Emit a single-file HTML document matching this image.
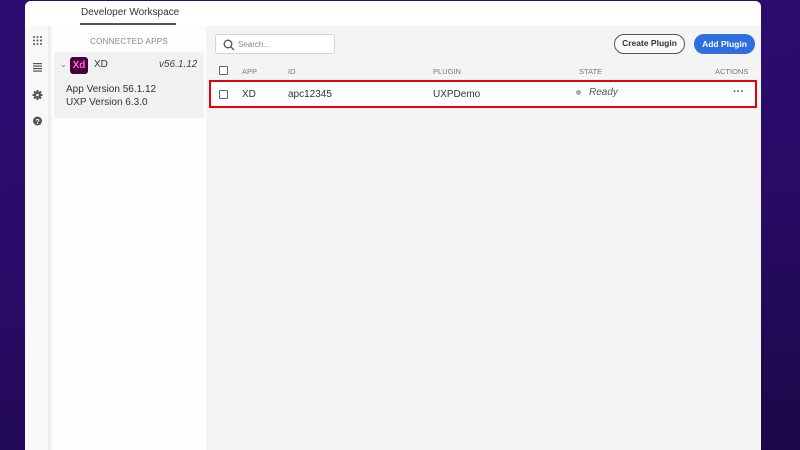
<!DOCTYPE html>
<html><head><style>
*{margin:0;padding:0;box-sizing:border-box}
html,body{width:800px;height:450px;overflow:hidden}
body{font-family:"Liberation Sans",sans-serif;background:linear-gradient(170deg,#2e0d72 0%,#2a0b68 50%,#1c0848 100%);position:relative}
.win{position:absolute;left:25px;top:1px;width:736px;height:449px;background:#f4f4f4;border-radius:6px 6px 0 0;overflow:hidden}
.title{position:absolute;left:0;top:0;width:736px;height:25px;background:#fff}
.title span{position:absolute;left:56px;top:6px;font-size:10px;color:#333}
.title i{position:absolute;left:55px;top:22px;width:96px;height:2px;background:#555}
.icons{position:absolute;left:0;top:25px;width:25px;height:440px;background:#f8f8f8;border-right:2px solid #eee}
.panel{position:absolute;left:27px;top:25px;width:154px;height:440px;background:#fdfdfd}
.ph{position:absolute;left:0;width:154px;top:11px;text-align:center;font-size:8px;color:#888;letter-spacing:.3px}
.card{position:absolute;left:2px;top:26px;width:150px;height:66px;background:#f1f1f1;border-radius:2px}
.t{position:absolute;white-space:nowrap}
.hdr{font-size:7.5px;color:#777;top:66px}
.cb{position:absolute;width:9px;height:9px;border:1px solid #666;border-radius:1px;background:#fff}
</style></head><body>
<div class="win">
<div class="title"><span>Developer Workspace</span><i></i></div>
<div class="icons">
<svg width="25" height="110" style="position:absolute;left:0;top:0">
<g fill="#555"><circle cx="9" cy="11" r="1"/><circle cx="12.5" cy="11" r="1"/><circle cx="16" cy="11" r="1"/><circle cx="9" cy="14.5" r="1"/><circle cx="12.5" cy="14.5" r="1"/><circle cx="16" cy="14.5" r="1"/><circle cx="9" cy="18" r="1"/><circle cx="12.5" cy="18" r="1"/><circle cx="16" cy="18" r="1"/>
<rect x="8" y="37" width="9" height="1.2"/><rect x="8" y="39.5" width="9" height="1.2"/><rect x="8" y="42" width="9" height="1.2"/><rect x="8" y="44.5" width="9" height="1.2"/>
<circle cx="12.5" cy="69" r="3.5"/><circle cx="12.5" cy="95" r="4.5"/></g>
<g stroke="#555" stroke-width="2"><line x1="12.5" y1="64" x2="12.5" y2="74"/><line x1="7.5" y1="69" x2="17.5" y2="69"/><line x1="9" y1="65.5" x2="16" y2="72.5"/><line x1="16" y1="65.5" x2="9" y2="72.5"/></g>
<circle cx="12.5" cy="69" r="1.3" fill="#f8f8f8"/>
<text x="12.5" y="98" font-size="7" font-weight="bold" fill="#fff" text-anchor="middle" font-family="Liberation Sans">?</text>
</svg></div>
<div class="panel">
<div class="ph">CONNECTED APPS</div>
<div class="card">
<div class="t" style="left:6px;top:8px;font-size:8px;color:#777">⌄</div>
<div class="t" style="left:16px;top:5px;width:18px;height:17px;background:#470137;border-radius:3px;color:#ff61f6;font-weight:bold;font-size:10px;text-align:center;line-height:17px">Xd</div>
<div class="t" style="left:40px;top:7px;font-size:10px;color:#333">XD</div>
<div class="t" style="left:105px;top:7px;font-size:10px;color:#444;font-style:italic">v56.1.12</div>
<div class="t" style="left:12px;top:31px;font-size:10px;color:#333;line-height:13px">App Version 56.1.12<br>UXP Version 6.3.0</div>
</div></div>
<div class="t" style="left:190px;top:33px;width:120px;height:20px;background:#fff;border:1px solid #d4d4d4;border-radius:3px">
<svg width="14" height="14" style="position:absolute;left:6px;top:3px"><circle cx="6" cy="6" r="3.8" fill="none" stroke="#555" stroke-width="1.3"/><line x1="8.8" y1="8.8" x2="12" y2="12" stroke="#555" stroke-width="1.3"/></svg>
<span style="position:absolute;left:22px;top:5px;font-size:8px;color:#888">Search...</span></div>
<div class="t" style="left:589px;top:33px;width:71px;height:20px;border:1.5px solid #555;border-radius:10px;font-size:8.5px;font-weight:bold;color:#333;text-align:center;line-height:17px;background:#fafafa">Create Plugin</div>
<div class="t" style="left:669px;top:33px;width:61px;height:20px;background:#2d6fdf;border-radius:10px;font-size:8.5px;font-weight:bold;color:#fff;text-align:center;line-height:20px">Add Plugin</div>
<div class="cb" style="left:194px;top:65px"></div>
<div class="t hdr" style="left:217px">APP</div><div class="t hdr" style="left:263px">ID</div><div class="t hdr" style="left:408px">PLUGIN</div><div class="t hdr" style="left:554px">STATE</div><div class="t hdr" style="left:690px">ACTIONS</div>
<div class="t" style="left:184px;top:79px;width:548px;height:28px;background:#fff;border:2px solid #e8000b"></div>
<div class="cb" style="left:194px;top:89px"></div>
<div class="t" style="left:217px;top:88px;font-size:10px;color:#333">XD</div>
<div class="t" style="left:263px;top:88px;font-size:10px;color:#333">apc12345</div>
<div class="t" style="left:408px;top:88px;font-size:10px;color:#333">UXPDemo</div>
<div class="t" style="left:551px;top:89px;width:5px;height:5px;border-radius:50%;background:#aaa"></div>
<div class="t" style="left:564px;top:86px;font-size:10px;color:#555;font-style:italic">Ready</div>
<div class="t" style="left:708px;top:85px;font-size:11px;color:#555;font-weight:bold">···</div>
</div>
</body></html>
